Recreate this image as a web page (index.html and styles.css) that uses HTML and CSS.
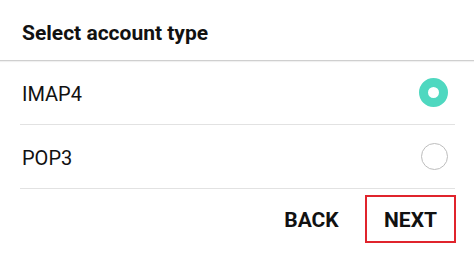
FILE: index.html
```html
<!DOCTYPE html>
<html>
<head>
<meta charset="utf-8">
<link rel="stylesheet" href="styles.css">
</head>
<body>
<div class="dialog">
  <div class="header">Select account type</div>
  <div class="list">
    <div class="row">
      <span class="label">IMAP4</span>
      <span class="radio checked"></span>
    </div>
    <div class="row">
      <span class="label">POP3</span>
      <span class="radio"></span>
    </div>
  </div>
  <div class="footer">
    <button class="btn">BACK</button>
    <button class="btn highlight">NEXT</button>
  </div>
</div>
</body>
</html>
```
FILE: styles.css
```css
html, body {
  margin: 0;
  padding: 0;
  background: #fff;
}
.dialog {
  width: 474px;
  height: 253px;
  font-family: Roboto, "Liberation Sans", sans-serif;
  color: #111;
  display: flex;
  flex-direction: column;
}
.header {
  height: 61px;
  box-sizing: border-box;
  padding-left: 22px;
  padding-top: 6px;
  display: flex;
  align-items: center;
  font-size: 21px;
  font-weight: bold;
  border-bottom: 1px solid #cfcfcf;
  box-shadow: 0 1px 1px rgba(0,0,0,0.06);
}
.list {
  margin: 0 19px 0 20px;
}
.row {
  height: 63px;
  border-bottom: 1px solid #e2e2e2;
  display: flex;
  align-items: center;
  justify-content: space-between;
  padding-left: 2px;
  padding-right: 7px;
}
.label {
  font-size: 20px;
  padding-top: 3px;
}
.radio {
  width: 25px;
  height: 25px;
  border-radius: 50%;
  border: 1.6px solid #bdbdbd;
  box-sizing: content-box;
}
.radio.checked {
  width: 11px;
  height: 11px;
  border: 9px solid #4fd8c0;
  background: #fff;
}
.footer {
  display: flex;
  justify-content: flex-end;
  gap: 8px;
  padding-right: 18px;
  padding-top: 6px;
}
.btn {
  width: 91px;
  height: 48px;
  box-sizing: border-box;
  border: 2px solid transparent;
  background: transparent;
  font-family: Roboto, "Liberation Sans", sans-serif;
  font-size: 21px;
  font-weight: bold;
  color: #111;
  padding: 2px 0 0;
}
.btn.highlight {
  border-color: #e0242c;
}
```
